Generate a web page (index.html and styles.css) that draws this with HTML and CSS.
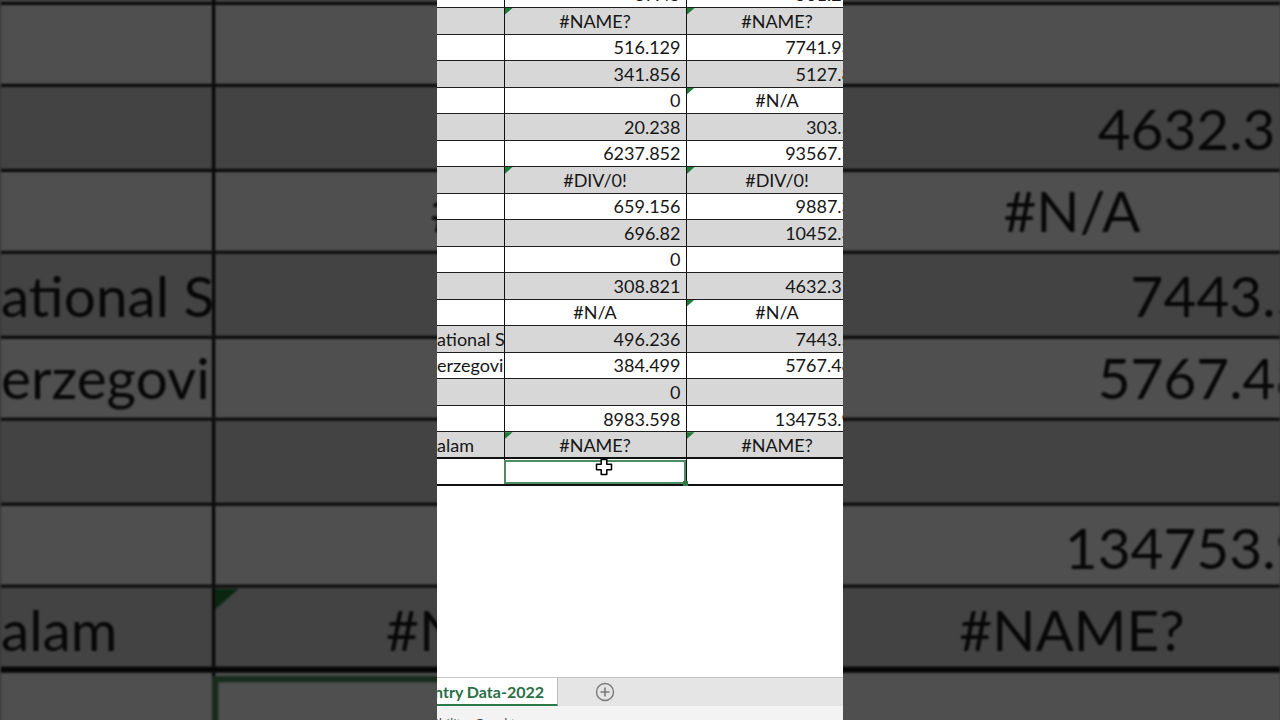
FILE: index.html
```html
<!DOCTYPE html>
<html lang="en">
<head>
<meta charset="utf-8">
<title>Country Data-2022</title>
<link rel="stylesheet" href="styles.css">
</head>
<body>
<div class="stage">
  <div class="backdrop" aria-hidden="true">
    <div class="strip">
      <div class="sheet">
        <div class="row part"><div class="cell a"></div><div class="cell b">37.45</div><div class="cell c">561.245</div></div>
        <div class="row gray"><div class="cell a"></div><div class="cell b err tri">#NAME?</div><div class="cell c err tri">#NAME?</div></div>
        <div class="row"><div class="cell a"></div><div class="cell b">516.129</div><div class="cell c">7741.935</div></div>
        <div class="row gray"><div class="cell a"></div><div class="cell b">341.856</div><div class="cell c">5127.84</div></div>
        <div class="row"><div class="cell a"></div><div class="cell b">0</div><div class="cell c err tri">#N/A</div></div>
        <div class="row gray"><div class="cell a"></div><div class="cell b">20.238</div><div class="cell c">303.57</div></div>
        <div class="row"><div class="cell a"></div><div class="cell b">6237.852</div><div class="cell c">93567.78</div></div>
        <div class="row gray"><div class="cell a"></div><div class="cell b err tri">#DIV/0!</div><div class="cell c err tri">#DIV/0!</div></div>
        <div class="row"><div class="cell a"></div><div class="cell b">659.156</div><div class="cell c">9887.34</div></div>
        <div class="row gray"><div class="cell a"></div><div class="cell b">696.82</div><div class="cell c">10452.31</div></div>
        <div class="row"><div class="cell a"></div><div class="cell b">0</div><div class="cell c"></div></div>
        <div class="row gray"><div class="cell a"></div><div class="cell b">308.821</div><div class="cell c">4632.315</div></div>
        <div class="row"><div class="cell a"></div><div class="cell b err">#N/A</div><div class="cell c err tri">#N/A</div></div>
        <div class="row gray"><div class="cell a">ational Standards</div><div class="cell b">496.236</div><div class="cell c">7443.54</div></div>
        <div class="row"><div class="cell a">erzegovina</div><div class="cell b">384.499</div><div class="cell c">5767.485</div></div>
        <div class="row gray"><div class="cell a"></div><div class="cell b">0</div><div class="cell c"></div></div>
        <div class="row"><div class="cell a"></div><div class="cell b">8983.598</div><div class="cell c">134753.97</div></div>
        <div class="row gray last"><div class="cell a">alam</div><div class="cell b err tri">#NAME?</div><div class="cell c err tri">#NAME?</div></div>
        <div class="row end"><div class="cell a"></div><div class="cell b sel"><span class="handle"></span><svg class="cursor" width="18" height="18" viewBox="0 0 18 18"><path d="M6.2 1.5h5.6v4.7h4.7v5.6h-4.7v4.7h-5.6v-4.7h-4.7v-5.6h4.7z" fill="#fff" stroke="#000" stroke-width="1.5" stroke-linejoin="round"/></svg></div><div class="cell c"></div></div>
      </div>
      <div class="blank"></div>
      <div class="tabbar">
        <div class="tab"><span>Country Data-2022</span></div>
        <svg class="addsheet" width="20" height="20" viewBox="0 0 20 20"><circle cx="10" cy="10" r="8.5" fill="none" stroke="#7a7a7a" stroke-width="1.4"/><path d="M10 5.5v9M5.5 10h9" stroke="#7a7a7a" stroke-width="1.6"/></svg>
      </div>
      <div class="status"><span>Accessibility: Good to go</span></div>
    </div>
  </div>

  <div class="strip main">
    <div class="sheet">
      <div class="row part"><div class="cell a"></div><div class="cell b">37.45</div><div class="cell c">561.245</div></div>
      <div class="row gray"><div class="cell a"></div><div class="cell b err tri">#NAME?</div><div class="cell c err tri">#NAME?</div></div>
      <div class="row"><div class="cell a"></div><div class="cell b">516.129</div><div class="cell c">7741.935</div></div>
      <div class="row gray"><div class="cell a"></div><div class="cell b">341.856</div><div class="cell c">5127.84</div></div>
      <div class="row"><div class="cell a"></div><div class="cell b">0</div><div class="cell c err tri">#N/A</div></div>
      <div class="row gray"><div class="cell a"></div><div class="cell b">20.238</div><div class="cell c">303.57</div></div>
      <div class="row"><div class="cell a"></div><div class="cell b">6237.852</div><div class="cell c">93567.78</div></div>
      <div class="row gray"><div class="cell a"></div><div class="cell b err tri">#DIV/0!</div><div class="cell c err tri">#DIV/0!</div></div>
      <div class="row"><div class="cell a"></div><div class="cell b">659.156</div><div class="cell c">9887.34</div></div>
      <div class="row gray"><div class="cell a"></div><div class="cell b">696.82</div><div class="cell c">10452.31</div></div>
      <div class="row"><div class="cell a"></div><div class="cell b">0</div><div class="cell c"></div></div>
      <div class="row gray"><div class="cell a"></div><div class="cell b">308.821</div><div class="cell c">4632.315</div></div>
      <div class="row"><div class="cell a"></div><div class="cell b err">#N/A</div><div class="cell c err tri">#N/A</div></div>
      <div class="row gray"><div class="cell a">ational Standards</div><div class="cell b">496.236</div><div class="cell c">7443.54</div></div>
      <div class="row"><div class="cell a">erzegovina</div><div class="cell b">384.499</div><div class="cell c">5767.485</div></div>
      <div class="row gray"><div class="cell a"></div><div class="cell b">0</div><div class="cell c"></div></div>
      <div class="row"><div class="cell a"></div><div class="cell b">8983.598</div><div class="cell c">134753.97</div></div>
      <div class="row gray last"><div class="cell a">alam</div><div class="cell b err tri">#NAME?</div><div class="cell c err tri">#NAME?</div></div>
      <div class="row end"><div class="cell a"></div><div class="cell b sel"><span class="handle"></span><svg class="cursor" width="18" height="18" viewBox="0 0 18 18"><path d="M6.2 1.5h5.6v4.7h4.7v5.6h-4.7v4.7h-5.6v-4.7h-4.7v-5.6h4.7z" fill="#fff" stroke="#000" stroke-width="1.5" stroke-linejoin="round"/></svg></div><div class="cell c"></div></div>
    </div>
    <div class="blank"></div>
    <div class="tabbar">
      <div class="tab"><span>Country Data-2022</span></div>
      <svg class="addsheet" width="20" height="20" viewBox="0 0 20 20"><circle cx="10" cy="10" r="8.5" fill="none" stroke="#7a7a7a" stroke-width="1.4"/><path d="M10 5.5v9M5.5 10h9" stroke="#7a7a7a" stroke-width="1.6"/></svg>
    </div>
    <div class="status"><span>Accessibility: Good to go</span></div>
  </div>
</div>
</body>
</html>
```

FILE: styles.css
```css
* { box-sizing: border-box; }
html, body { margin: 0; padding: 0; }
body { background: #000; overflow: hidden; font-family: Lato, "Open Sans", sans-serif; }

.stage {
  position: relative;
  width: 1280px;
  height: 720px;
  overflow: hidden;
  background: #3a3a3a;
}

.backdrop {
  position: absolute;
  left: 1px;
  top: -773px;
  width: 406px;
  transform: scale(3.15);
  transform-origin: 0 0;
  filter: brightness(0.31) blur(0.35px);
}

.strip {
  width: 406px;
  height: 720px;
  background: #fff;
  display: flex;
  flex-direction: column;
  overflow: hidden;
}
.strip.main {
  position: relative;
  z-index: 1;
  margin-left: 437px;
}

.sheet {
  display: flex;
  flex-direction: column;
  margin-top: -18.5px;
  flex: none;
}

.row {
  display: flex;
  height: 26.53px;
  flex: none;
  background: #fff;
  border-bottom: 1.5px solid #1e1e1e;
}
.row.gray { background: #d7d7d7; }
.row.last { border-bottom: 2px solid #111; }
.row.end { border-bottom: 2px solid #111; height: 27.5px; }

.cell {
  position: relative;
  display: flex;
  align-items: center;
  flex: none;
  white-space: nowrap;
  overflow: hidden;
  font-size: 18px;
  color: #161616;
  line-height: 1;
}
.cell.a { width: 66.5px; }
.cell.b {
  width: 182px;
  border-left: 1.5px solid #111;
  justify-content: flex-end;
  padding-right: 5px;
}
.cell.c {
  width: 190px;
  border-left: 1.5px solid #111;
  justify-content: flex-end;
  padding-right: 13px;
}
.cell.err { justify-content: center; padding: 0; }
.cell.c.err { padding-right: 8px; }

.cell.tri::before {
  content: "";
  position: absolute;
  left: 0;
  top: 0;
  width: 8px;
  height: 7px;
  background: #1d7a38;
  clip-path: polygon(0 0, 100% 0, 0 100%);
}

.cell.sel { overflow: visible; }
.cell.sel::after {
  content: "";
  position: absolute;
  left: -1px;
  top: 1px;
  right: 0;
  bottom: 0;
  border: 2px solid #4d8c5e;
}
.handle {
  position: absolute;
  right: -2px;
  bottom: -2px;
  width: 5px;
  height: 5px;
  background: #2f7a45;
  z-index: 2;
}
.cursor {
  position: absolute;
  left: 90px;
  top: -1px;
  z-index: 3;
}

.blank { flex: 1; background: #fff; }

.tabbar {
  flex: none;
  height: 29px;
  display: flex;
  align-items: stretch;
  background: #e5e5e5;
  border-top: 1px solid #c4c4c4;
}
.tab {
  width: 121px;
  background: #fff;
  border-right: 1px solid #bdbdbd;
  border-bottom: 2px solid #2c7a4a;
  display: flex;
  justify-content: flex-end;
  align-items: center;
  padding-right: 13px;
  overflow: hidden;
  white-space: nowrap;
}
.tab span {
  font-family: Lato, sans-serif;
  font-weight: 700;
  font-size: 16px;
  color: #2a6e45;
}
.addsheet {
  align-self: center;
  margin-left: 37px;
}

.status {
  flex: none;
  height: 14px;
  background: #f3f3f3;
  overflow: hidden;
  padding-top: 9px;
  white-space: nowrap;
}
.status span {
  display: block;
  margin-left: -42px;
  font-family: "Open Sans", sans-serif;
  font-size: 13px;
  line-height: 16px;
  color: #444;
}
```
